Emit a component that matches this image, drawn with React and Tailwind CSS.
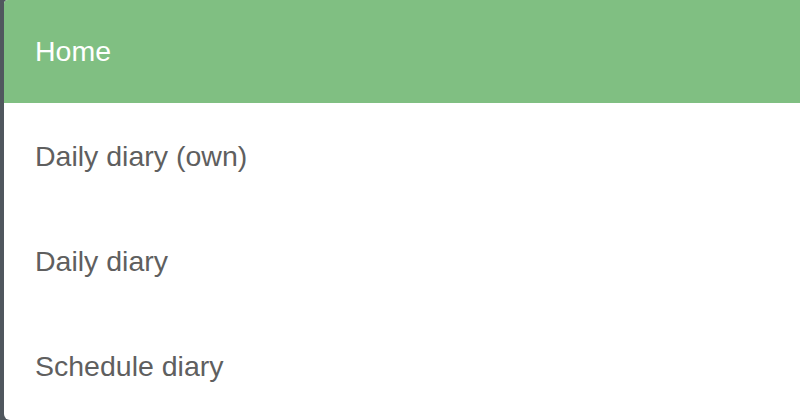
export default function App() {
  const items = ["Daily diary (own)", "Daily diary", "Schedule diary"];

  return (
    <div className="w-[800px] h-[420px] bg-[#50575e] pl-1 overflow-hidden" style={{ fontFamily: '"Liberation Sans", Arial, sans-serif' }}>
      <div className="h-full bg-white rounded-tl-[4px] rounded-bl-[6px] overflow-hidden flex flex-col">
        {/* Header */}
        <div className="h-[103px] shrink-0 bg-[#80bf82] flex items-center pl-[31px]">
          <span className="text-[28.5px] leading-none text-white">Home</span>
        </div>

        {/* Menu */}
        {items.map((label) => (
          <div key={label} className="h-[105px] shrink-0 flex items-center pl-[31px] pt-px">
            <span className="text-[28.5px] leading-none text-[#5f5f5f]">{label}</span>
          </div>
        ))}
      </div>
    </div>
  );
}
